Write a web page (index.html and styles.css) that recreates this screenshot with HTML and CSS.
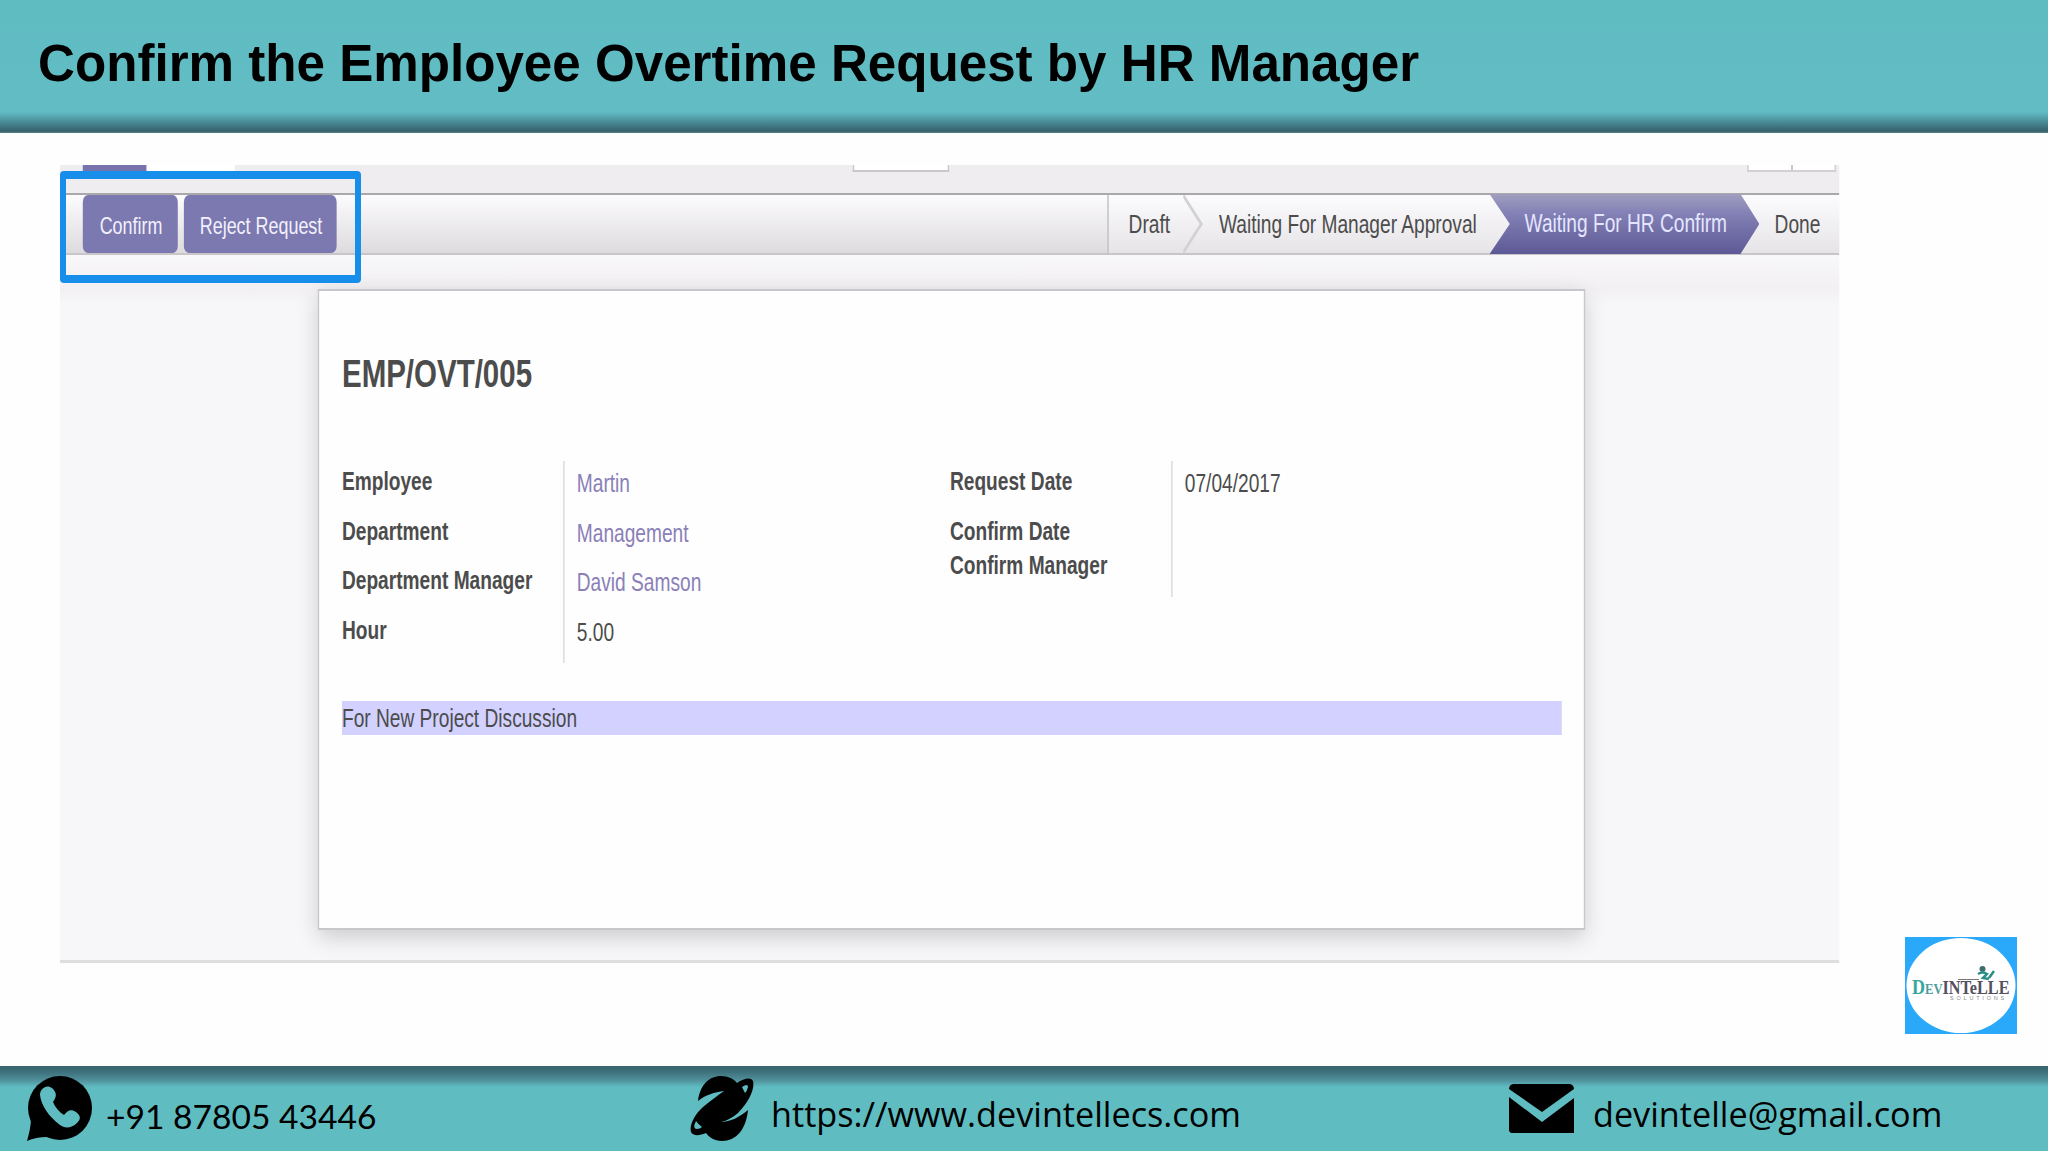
FILE: index.html
```
<!DOCTYPE html>
<html lang="en">
<head>
  <meta charset="UTF-8">
  <title>Confirm the Employee Overtime Request by HR Manager</title>
  <link rel="stylesheet" href="styles.css">
</head>
<body>
  <header class="title-bar">
    <h1>Confirm the Employee Overtime Request by HR Manager</h1>
  </header>

  <main class="stage">
    <div class="screen-wrap">
      <div class="screen">
        <div class="strip">
          <i class="tab-on"></i><i class="tab-off"></i><i class="search"></i><i class="pager"></i>
        </div>
        <div class="toolbar">
          <button class="btn">Confirm</button>
          <button class="btn reject">Reject Request</button>
          <div class="status">
            <span class="step draft">Draft</span>
            <svg class="chevron" width="30" height="60" viewBox="0 0 30 60"><path d="M-1 0 L24 30 L-1 60" fill="none" stroke="#d3d1d4" stroke-width="3.500"/></svg>
            <span class="step manager">Waiting For Manager Approval</span>
            <span class="step hr">Waiting For HR Confirm</span>
            <span class="step done">Done</span>
          </div>
        </div>
        <div class="form-bg">
          <div class="sheet">
            <h2>EMP/OVT/005</h2>
            <div class="groups">
              <div class="group">
                <div class="labels">
                  <b>Employee</b><b>Department</b><b>Department Manager</b><b>Hour</b>
                </div>
                <div class="values">
                  <a>Martin</a><a>Management</a><a>David Samson</a><span>5.00</span>
                </div>
              </div>
              <div class="group right">
                <div class="labels">
                  <b>Request Date</b><b class="short">Confirm Date</b><b>Confirm Manager</b>
                </div>
                <div class="values">
                  <span>07/04/2017</span>
                </div>
              </div>
            </div>
            <p class="notes">For New Project Discussion</p>
          </div>
        </div>
      </div>
      <div class="highlight"></div>
    </div>

    <div class="logo">
      <svg width="112" height="97" viewBox="0 0 112 97">
        <rect width="112" height="97" fill="#2aa8fa"/>
        <ellipse cx="56" cy="48.500" rx="54.500" ry="47.500" fill="#fff"/>
        <circle cx="77.500" cy="32" r="3" fill="#3d6e70"/>
        <path d="M73 37 q5 -3 9 0 l-4 4 6 1 M84 41 l5 -7" fill="none" stroke="#2a9087" stroke-width="2.500"/>
        <path d="M53 42.500 h21" stroke="#777" stroke-width="1"/>
      </svg>
      <div class="logo-name"><span class="d">D</span><span class="ev">EV</span>INTeLLE</div>
      <div class="logo-sub">SOLUTIONS</div>
    </div>
  </main>

  <footer class="contact-bar">
    <div class="contact phone">
      <svg width="65" height="65" viewBox="0 0 65 65">
        <circle cx="33" cy="32" r="32"/>
        <path d="M4 43 Q4 51 0 65 Q9 61 20 61 Z"/>
        <path d="M13 19 C13 12 20 8 25 12 C30 17 30 20 26 26 C28 31 32 36 37 39 C41 34 44 33 49 36 C54 40 54 43 50 47 C45 52 38 53 33 49 C22 41 14 29 13 19 Z" fill="#5fbdc2"/>
      </svg>
      <span>+91 87805 43446</span>
    </div>
    <div class="contact web">
      <svg width="65" height="65" viewBox="0 0 65 65">
        <path d="M8 25 C10 9 19 0 31 0 C38 0 44 3 47 7 C54 2 61 1 63 5 C65 13 59 26 48 37 C42 42 36 45 31 46 C40 46 50 41 58 34 C56 54 46 65 32 65 C24 65 19 61 16 57 C9 60 3 60 1 56 C-1 49 5 38 13 31 C20 25 27 20 34 15 C25 16 15 19 8 25 Z"/>
        <path d="M52 11 q6 -4 6 0 q-1 4 -3 6 z M6 45 q-4 8 1 8 q3 0 5 -2 q-4 -3 -6 -6z" fill="#5fbdc2"/>
      </svg>
      <span>https://www.devintellecs.com</span>
    </div>
    <div class="contact mail">
      <svg width="65" height="49" viewBox="0 0 65 49">
        <path d="M4 0 H61 Q65 1 65 5 L33 28 L0 5 Q0 1 4 0 Z M0 13 L33 38 L65 14 V49 H2 L0 47 Z"/>
      </svg>
      <span>devintelle@gmail.com</span>
    </div>
  </footer>
</body>
</html>
```

FILE: styles.css
```
* {
  box-sizing: border-box;
}
body {
  margin: 0;
  width: 2048px;
  height: 1152px;
  background: #fefefe;
  font-family: "Liberation Sans", Arial, sans-serif;
  overflow: hidden;
}
.title-bar {
  height: 133px;
  padding: 35px 0 0 38px;
  background: linear-gradient(#5fbdc2 0, #62bcc4 112px, #509aa4 119px, #3a6b76 129px, #35616c 131px, #5a8088 133px);
}
.title-bar h1 {
  margin: 0;
  font-size: 51.15px;
  line-height: 58px;
  color: #000;
  white-space: nowrap;
}
.stage {
  height: 933px;
  padding: 32px 0 0 60px;
  position: relative;
}
.screen-wrap {
  position: relative;
  width: 1779px;
  height: 798px;
}

/* the whole form is squeezed horizontally */
.screen {
  width: 2341px;
  height: 798px;
  transform: scaleX(.76);
  transform-origin: 0 0;
  background: #f7f6f9;
  color: #4c4c4c;
  font-size: 25.2px;
  border-bottom: 3px solid #dfdde0;
}
.strip {
  height: 28px;
  display: flex;
  background: #efedf0;
  padding-left: 30px;
}
.strip i {
  height: 7px;
}
.tab-on {
  width: 84px;
  background: #7673ad;
}
.tab-off {
  width: 116px;
  background: #fff;
}
.search {
  width: 127px;
  margin-left: 813px;
  background: #fff;
  border: 2px solid #c9c7ca;
  border-top: 0;
}
.pager {
  width: 117px;
  margin-left: 1050px;
  background: linear-gradient(90deg, #fff 56px, #c9c7ca 56px, #c9c7ca 58px, #fff 58px);
  border: 2px solid #d2d0d3;
  border-top: 0;
}
.toolbar {
  height: 62px;
  display: flex;
  padding-left: 30px;
  background: linear-gradient(#fcfbfd, #dddbde);
  border-top: 2px solid #aaa8ab;
  border-bottom: 2px solid #c8c6c9;
}
.btn {
  width: 125px;
  height: 58px;
  margin: 0 8px 0 0;
  padding: 4px 0 0 2px;
  border: 0;
  border-radius: 7px;
  background: #7c79b0;
  color: #f2f0fc;
  font: 23.6px "Liberation Sans", Arial, sans-serif;
}
.reject {
  width: 201px;
}
.status {
  margin-left: auto;
  display: flex;
  width: 963px;
  line-height: 58px;
  background: linear-gradient(#fcfbfd, #e6e4e6);
  border-left: 2px solid #c4c2c5;
  white-space: nowrap;
}
.draft {
  width: 98px;
  padding-left: 26px;
}
.chevron {
  height: 58px;
}
.manager {
  width: 373px;
  padding-left: 17px;
}
.hr {
  width: 355px;
  height: 60px;
  margin-top: -1px;
  padding-left: 46px;
  color: #e4e6ff;
  background: linear-gradient(#a09fbe, #8482b6 30%, #5d5996);
  clip-path: polygon(0 0, 93% 0, 100% 50%, 93% 100%, 0 100%, 7.500% 50%);
}
.done {
  padding-left: 20px;
}
.form-bg {
  height: 705px;
  padding: 34px 0 0 339px;
  background: linear-gradient(#f8f7fa, #f2f0f3 34px, #f7f6f9 50px);
}
.sheet {
  width: 1668px;
  height: 641px;
  padding: 59px 22px 0 30px;
  background: #fefefe;
  border: 2px solid #c9c7cc;
  box-shadow: 0 7px 24px rgba(0, 0, 0, .18);
}
.sheet h2 {
  margin: 0;
  font-size: 38.8px;
  line-height: 48px;
}
.groups {
  display: flex;
  margin-top: 63px;
  height: 240px;
}
.group {
  width: 800px;
  display: flex;
}
.labels,
.values {
  display: flex;
  flex-direction: column;
  line-height: 29px;
}
.labels {
  width: 291px;
  padding-top: 6px;
  gap: 20.7px;
}
.labels .short {
  margin-bottom: -15px;
}
.values {
  height: 202px;
  padding: 8px 0 0 16px;
  gap: 20.7px;
  border-left: 2px solid #dcdadf;
}
.values a {
  color: #8a80b8;
}
.right .values {
  height: 136px;
}
.notes {
  margin: 0;
  width: 1605px;
  height: 34px;
  line-height: 35px;
  background: #d2d1ff;
}
.highlight {
  position: absolute;
  left: 0;
  top: 6px;
  width: 301px;
  height: 112px;
  border: 8px solid #168eea;
  border-width: 8px 6px;
  border-radius: 4px;
}
.logo {
  position: absolute;
  left: 1905px;
  top: 804px;
  width: 112px;
  height: 97px;
}
.logo-name {
  position: absolute;
  left: 7px;
  top: 38px;
  font-family: "Liberation Serif", serif;
  font-weight: bold;
  font-size: 18px;
  line-height: 24px;
  color: #555060;
  white-space: nowrap;
  transform: scaleX(.9);
  transform-origin: 0 0;
}
.logo-name .d {
  font-size: 20px;
  color: #35a6a0;
}
.logo-name .ev {
  font-size: 14px;
  color: #4f9c9c;
}
.logo-sub {
  position: absolute;
  left: 45px;
  top: 58px;
  font-size: 5.5px;
  line-height: 7px;
  letter-spacing: 2.8px;
  color: #8a8a90;
}

.contact-bar {
  height: 85px;
  display: flex;
  background: linear-gradient(#3a6570 0, #3b6e78 5px, #508f9a 14px, #5fbdc2 21px);
  font-family: "Open Sans", sans-serif;
  font-size: 34.2px;
  line-height: 40px;
  color: #000;
}
.contact {
  display: flex;
  align-items: flex-start;
  padding-top: 10px;
  white-space: nowrap;
}
.phone {
  width: 663px;
  padding-left: 27px;
}
.phone span {
  margin: 20px 0 0 14px;
  font-family: Lato, sans-serif;
  font-size: 33.6px;
}
.web {
  width: 846px;
  padding-left: 27px;
}
.web span {
  margin: 18px 0 0 16px;
}
.mail svg {
  margin-top: 8px;
}
.mail span {
  margin: 18px 0 0 19px;
}
```
